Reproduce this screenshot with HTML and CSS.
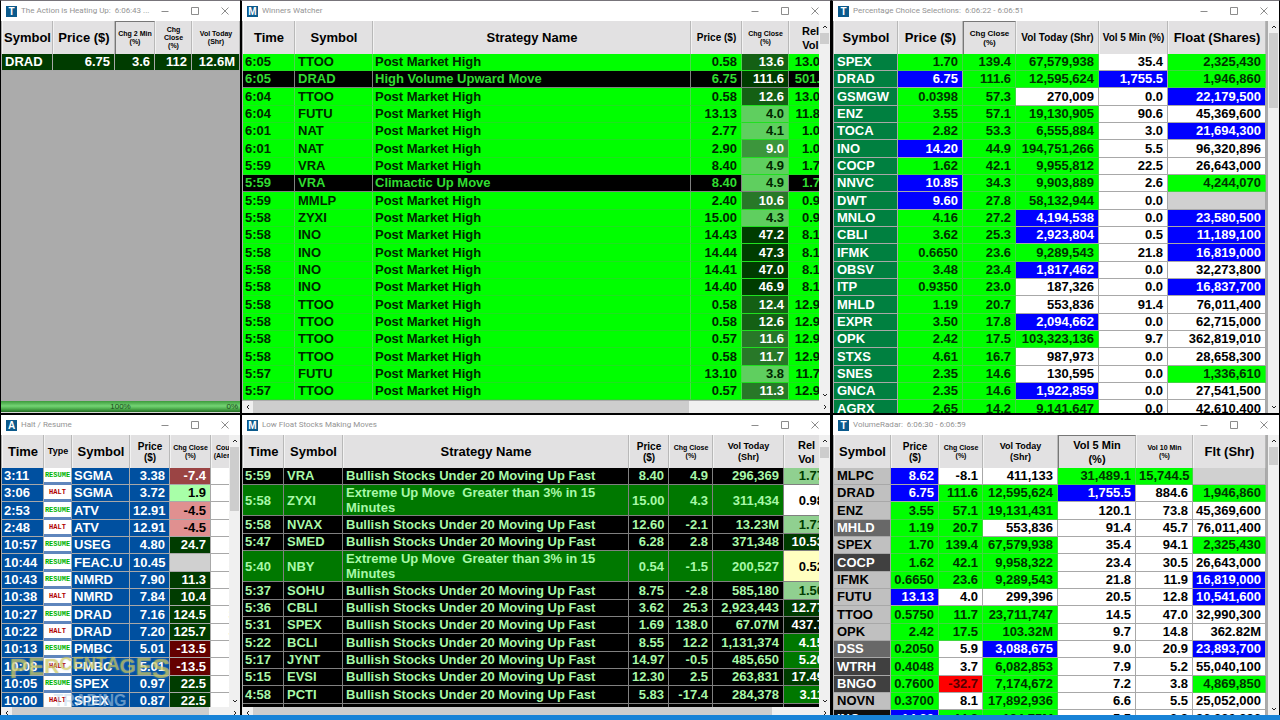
FILE: index.html
```html
<!DOCTYPE html>
<html lang="en">
<head>
    <meta charset="UTF-8">
    <meta name="viewport" content="width=device-width, initial-scale=1.0">
    <title>Stock Scanner</title>
    <link rel="stylesheet" href="styles.css">
</head>
<body>
    <main class="desktop">
        <section class="window heating">
            <header class="titlebar">
                <span class="app-icon">T</span>
                <h2>The Action is Heating Up:&nbsp; 6:06:43 ...</h2>
            </header>
            <div class="content">
                <div class="view">
                    <table>
                        <thead>
                            <tr>
                                <th>Symbol</th>
                                <th>Price ($)</th>
                                <th class="xs sorted">Chg 2 Min<br>(%)</th>
                                <th class="xs">Chg<br>Close<br>(%)</th>
                                <th class="xs">Vol Today<br>(Shr)</th>
                            </tr>
                        </thead>
                        <tbody id="heating-rows"></tbody>
                    </table>
                </div>
            </div>
            <div class="progress"><span>100%</span><span class="right">0%</span></div>
        </section>

        <section class="window middle winners">
            <header class="titlebar">
                <span class="app-icon">M</span>
                <h2>Winners Watcher</h2>
            </header>
            <div class="content">
                <div class="view">
                    <table>
                        <thead>
                            <tr>
                                <th>Time</th>
                                <th>Symbol</th>
                                <th>Strategy Name</th>
                                <th class="md">Price ($)</th>
                                <th class="xs">Chg Close<br>(%)</th>
                                <th class="lg">Rel<br>Vol</th>
                            </tr>
                        </thead>
                        <tbody id="winners-rows"></tbody>
                    </table>
                </div>
                <div class="vscroll"></div>
            </div>
            <div class="hscroll"></div>
        </section>

        <section class="window side choice">
            <header class="titlebar">
                <span class="app-icon">T</span>
                <h2>Percentage Choice Selections:&nbsp; 6:06:22 - 6:06:51</h2>
            </header>
            <div class="content">
                <div class="view">
                    <table>
                        <thead>
                            <tr>
                                <th>Symbol</th>
                                <th>Price ($)</th>
                                <th class="sm sorted">Chg Close<br>(%)</th>
                                <th class="md">Vol Today (Shr)</th>
                                <th class="md">Vol 5 Min (%)</th>
                                <th>Float (Shares)</th>
                            </tr>
                        </thead>
                        <tbody id="choice-rows"></tbody>
                    </table>
                </div>
                <div class="vscroll"></div>
            </div>
        </section>

        <section class="window halts">
            <header class="titlebar">
                <span class="app-icon">A</span>
                <h2>Halt / Resume</h2>
            </header>
            <div class="content">
                <div class="view">
                    <table>
                        <thead>
                            <tr>
                                <th>Time</th>
                                <th class="nm">Type</th>
                                <th>Symbol</th>
                                <th class="md">Price<br>($)</th>
                                <th class="xs">Chg Close<br>(%)</th>
                                <th class="xs">Count<br>(Alerts)</th>
                            </tr>
                        </thead>
                        <tbody id="halts-rows"></tbody>
                    </table>
                </div>
                <div class="vscroll"></div>
            </div>
            <div class="hscroll"></div>
            <div class="watermark">
                <div class="arch"><span class="a1">P</span><span class="a2">E</span><span class="a3">R</span><span class="a4">C</span><span class="a5">E</span><span class="a5">N</span><span class="a5">T</span><span class="a4">A</span><span class="a3">G</span><span class="a2">E</span><span class="a1">S</span></div>
                <div class="sub">TRADING</div>
            </div>
        </section>

        <section class="window middle lowfloat">
            <header class="titlebar">
                <span class="app-icon">M</span>
                <h2>Low Float Stocks Making Moves</h2>
            </header>
            <div class="content">
                <div class="view">
                    <table>
                        <thead>
                            <tr>
                                <th>Time</th>
                                <th>Symbol</th>
                                <th>Strategy Name</th>
                                <th class="md">Price<br>($)</th>
                                <th class="xs">Chg Close<br>(%)</th>
                                <th class="nm">Vol Today<br>(Shr)</th>
                                <th class="lg">Rel<br>Vol</th>
                            </tr>
                        </thead>
                        <tbody id="lowfloat-rows"></tbody>
                    </table>
                </div>
                <div class="vscroll"></div>
            </div>
            <div class="hscroll"></div>
        </section>

        <section class="window side radar">
            <header class="titlebar">
                <span class="app-icon">T</span>
                <h2>VolumeRadar:&nbsp; 6:06:30 - 6:06:59</h2>
            </header>
            <div class="content">
                <div class="view">
                    <table>
                        <thead>
                            <tr>
                                <th>Symbol</th>
                                <th class="md">Price<br>($)</th>
                                <th class="xs">Chg Close<br>(%)</th>
                                <th class="nm">Vol Today<br>(Shr)</th>
                                <th class="lg sorted">Vol 5 Min<br>(%)</th>
                                <th class="xs">Vol 10 Min<br>(%)</th>
                                <th>Flt (Shr)</th>
                            </tr>
                        </thead>
                        <tbody id="radar-rows"></tbody>
                    </table>
                </div>
                <div class="vscroll"></div>
            </div>
        </section>
    </main>
    <footer class="taskbar"></footer>

    <script src="script.js"></script>
</body>
</html>
```
FILE: styles.css
```css
* {
    box-sizing: border-box;
}
body {
    margin: 0;
    height: 100vh;
    display: flex;
    flex-direction: column;
    overflow: hidden;
    background: #000;
    font-family: "Liberation Sans", Arial, sans-serif;
    color: #000;
}
.desktop {
    flex: 1;
    min-height: 0;
    display: grid;
    grid-template-columns: 240fr 591fr 449fr;
    grid-template-rows: 414fr 301fr;
}
.taskbar {
    height: 5px;
    background: #1883d7;
}

/* windows */
.window {
    position: relative;
    display: flex;
    flex-direction: column;
    min-width: 0;
    min-height: 0;
    overflow: hidden;
    background: #ababab;
    border: 1px solid #000;
    border-right: none;
    border-bottom: none;
}
.window.middle, .window.side {
    border-left-width: 2px;
    border-right: 1px solid #000;
}
.heating, .winners, .choice {
    border-top-color: #77747a;
    border-bottom: 1px solid #000;
}
.titlebar {
    display: flex;
    align-items: center;
    flex: none;
    height: 20px;
    padding-left: 5px;
    background: #fff;
}
.app-icon {
    width: 11px;
    height: 11px;
    background: #0b5a8c;
    color: #fff;
    font-size: 10px;
    line-height: 11px;
    font-weight: bold;
    text-align: center;
}
.titlebar h2 {
    flex: 1;
    margin: 0 0 0 4px;
    font-family: Roboto, "Open Sans", sans-serif;
    font-size: 8px;
    line-height: 18px;
    font-weight: normal;
    white-space: nowrap;
    color: #949494;
}
.titlebar button {
    width: 30px;
    height: 18px;
    padding: 0;
    border: none;
    background: none;
    line-height: 0;
}
.titlebar svg {
    width: 8px;
    height: 8px;
    fill: none;
    stroke: #8c8c8c;
}
.content {
    flex: 1;
    min-height: 0;
    display: flex;
    padding-left: 1px;
}
.view {
    flex: 1;
    min-width: 0;
    overflow: hidden;
}
.side .view {
    padding-right: 2px;
}

/* scroll bars */
.vscroll {
    display: flex;
    flex-direction: column;
    align-items: center;
    width: 11px;
    background: #f0f0f0;
}
.hscroll {
    display: flex;
    flex: none;
    height: 12px;
    overflow: hidden;
    background: #f0f0f0;
}
.halts .hscroll, .lowfloat .hscroll {
    height: 8px;
}
.vscroll button, .hscroll button {
    width: 11px;
    height: 12px;
    flex: none;
    padding: 0;
    border: none;
    background: #f0f0f0;
    line-height: 0;
}
.vscroll svg, .hscroll svg {
    width: 8px;
    height: 8px;
    fill: none;
    stroke: #222;
}
.vscroll .thumb {
    width: 9px;
    height: 11px;
    background: #cdcdcd;
}
.hscroll .thumb {
    width: 436px;
    background: #cdcdcd;
}
.vscroll button:last-child {
    margin-top: auto;
}
.hscroll button:last-child {
    margin-left: auto;
}
.choice .vscroll .thumb {
    height: 75px;
}
.halts .vscroll .thumb {
    height: 64px;
}
.radar .vscroll .thumb {
    height: 18px;
}
.halts .hscroll .thumb {
    width: 197px;
}
.lowfloat .hscroll .thumb {
    width: 519px;
}

/* tables */
table {
    width: 100%;
    table-layout: fixed;
    border-collapse: separate;
    border-spacing: 0;
    font-size: 13px;
    font-weight: bold;
}
th {
    height: 33px;
    padding: 0;
    background: #e2e1e2;
    border-right: 1px solid #b8b8b8;
    border-left: 1px solid #f2f2f2;
    line-height: 14px;
    white-space: nowrap;
    overflow: hidden;
}
th.lg {
    font-size: 11px;
    line-height: 14px;
}
th.md {
    font-size: 10px;
    line-height: 11px;
}
th.nm {
    font-size: 9px;
    line-height: 11px;
}
th.sm {
    font-size: 8px;
    line-height: 9px;
}
th.xs {
    font-size: 7px;
    line-height: 8px;
}
th.sorted {
    border-top: 1px solid #777;
    border-left-color: #777;
}
td {
    height: 17px;
    padding: 0 4px 0 3px;
    border-right: 1px solid #a8a8a8;
    border-bottom: 1px solid #a8a8a8;
    line-height: 16px;
    text-align: right;
    white-space: nowrap;
}
tr:nth-child(3n) td {
    height: 18px;
}
td.g {
    background: #00ff00;
    color: #003200;
    border-color: #3fd83f;
}
td.b {
    background: #0000ff;
    color: #fff;
}
td.w {
    background: #fff;
}
td.r {
    background: #ff0000;
    color: #500;
}
td.n {
    background: #d0d0d0;
}
td.h1 {
    background: #003c00;
    color: #fff;
}

/* the action is heating up */
.heating th:nth-child(2) { width: 62px; }
.heating th:nth-child(3) { width: 40px; }
.heating th:nth-child(4) { width: 37px; }
.heating th:nth-child(5) { width: 48px; }
.heating td {
    background: #003c00;
    color: #fff;
}
.heating td:first-child, .choice td:first-child, .radar td:first-child {
    text-align: left;
}
.progress {
    display: grid;
    flex: none;
    height: 12px;
    background: linear-gradient(#3c9a3c, #74d474 45%, #4fae4f 70%, #226c22);
    border-bottom: 1px solid #d8d8d8;
    font-size: 8px;
    line-height: 11px;
    text-align: center;
    color: #1c4a1c;
}
.progress span {
    grid-area: 1 / 1;
}
.progress .right {
    padding-right: 2px;
    text-align: right;
}

/* winners watcher */
.winners table {
    width: calc(100% + 13px);
}
.winners th:nth-child(1) { width: 52px; }
.winners th:nth-child(2) { width: 78px; }
.winners th:nth-child(4) { width: 51px; }
.winners th:nth-child(5) { width: 47px; }
.winners th:nth-child(6) { width: 43px; }
.winners td {
    background: #00ff00;
    color: #002800;
    border-right-color: #4cd84c;
    border-bottom-color: #20e020;
}
.winners tr.dark td {
    background: #000;
    color: #30dc30;
    border-color: #808080;
}
.winners td:nth-child(-n+3), .lowfloat td:nth-child(-n+3) {
    padding-left: 2px;
    text-align: left;
}
.winners td:nth-child(2) {
    padding-left: 3px;
}
.winners td:nth-child(6) {
    padding-right: 11px;
}
.winners tr td.h1 { background: #003c00; color: #fff; }
.winners tr td.h2 { background: #146014; color: #fff; }
.winners tr td.h3 { background: #287828; color: #fff; }
.winners tr td.h4 { background: #3c963c; color: #fff; }
.winners tr td.h5 { background: #5fcf5f; color: #002800; }

/* percentage choice selections */
.choice th:nth-child(2) { width: 65px; }
.choice th:nth-child(3) { width: 53px; }
.choice th:nth-child(4) { width: 83px; }
.choice th:nth-child(5) { width: 69px; }
.choice th:nth-child(6) { width: 98px; }
.choice td:first-child {
    background: #008040;
    color: #fff;
}

/* halt / resume */
.halts table {
    width: calc(100% + 12px);
}
.halts th:nth-child(2) { width: 28px; }
.halts th:nth-child(3) { width: 58px; }
.halts th:nth-child(4) { width: 40px; }
.halts th:nth-child(5) { width: 41px; }
.halts th:nth-child(6) { width: 30px; }
.halts td {
    background: #0050a0;
    color: #fff;
}
.halts td:nth-child(1), .halts td:nth-child(3) {
    padding: 0 0 0 2px;
    text-align: left;
}
.halts tr td:nth-child(2) {
    padding: 0;
    background: #fff;
    border-bottom: 3px solid #5f86bd;
    font-family: "Liberation Mono", "Courier New", monospace;
    font-size: 7px;
    line-height: 12px;
    text-align: center;
    color: #b00000;
}
.halts tr td:nth-child(2).resume {
    color: #00b400;
}
.halts tr td:nth-child(6) {
    background: #fff;
    color: #000;
}
.halts td.red { background: #9b4444; }
.halts td.h1 { background: #003c00; }
.halts td.pink { background: #e09090; color: #000; }
.halts td.maroon { background: #640000; }
.halts td.mint { background: #a8ffa8; color: #000; }
.halts td.n { background: #d0d0d0; }

/* channel logo over the bottom rows */
.watermark {
    position: absolute;
    left: 9px;
    bottom: 6px;
    width: 160px;
    font-weight: bold;
    text-align: center;
    color: rgba(225, 205, 40, 0.5);
    pointer-events: none;
}
.arch {
    display: flex;
    justify-content: center;
    align-items: flex-start;
    height: 38px;
    font-family: "Liberation Sans Narrow", "Liberation Sans", sans-serif;
    text-shadow: 0 0 2px rgba(160, 190, 220, 0.6);
}
.arch span { line-height: 1; }
.arch .a1 { font-size: 28px; }
.arch .a2 { font-size: 24px; }
.arch .a3 { font-size: 21px; }
.arch .a4 { font-size: 18px; }
.arch .a5 { font-size: 17px; }
.watermark .sub {
    font-size: 16px;
    line-height: 16px;
    color: rgba(190, 215, 235, 0.55);
}

/* low float stocks making moves */
.lowfloat table {
    width: calc(100% + 10px);
}
.lowfloat th:nth-child(1) { width: 41px; }
.lowfloat th:nth-child(2) { width: 59px; }
.lowfloat th:nth-child(4) { width: 40px; }
.lowfloat th:nth-child(5) { width: 44px; }
.lowfloat th:nth-child(6) { width: 71px; }
.lowfloat th:nth-child(7) { width: 45px; }
.lowfloat td {
    background: #000;
    color: #a8f8a8;
    border-color: #808080;
}
.lowfloat td:nth-child(n+2):nth-child(-n+3) {
    padding-left: 3px;
}
.lowfloat tr.tall td {
    height: 31px;
    background: #007800;
    line-height: 15px;
}
.lowfloat tr.tall td:nth-child(3) {
    white-space: pre-line;
}
.lowfloat tr td.h1 { background: #003c00; color: #fff; }
.lowfloat tr td.h0 { background: #001400; color: #fff; }
.lowfloat tr td.h3 { background: #007800; color: #fff; }
.lowfloat tr td.h5 { background: #90d090; color: #003c00; }
.lowfloat tr.tall td.w { background: #fff; color: #000; }
.lowfloat tr.tall td.y { background: #ffffc0; color: #000; }

/* volume radar */
.radar th:nth-child(2) { width: 48px; }
.radar th:nth-child(3) { width: 44px; }
.radar th:nth-child(4) { width: 75px; }
.radar th:nth-child(5) { width: 78px; }
.radar th:nth-child(6) { width: 57px; }
.radar th:nth-child(7) { width: 73px; }
.radar td:first-child {
    background: #c0c0c0;
}
.radar tr td.d1 { background: #686868; color: #fff; }
.radar tr td.d2 { background: #404040; color: #fff; }
.radar tr td.d3 { background: #101010; color: #fff; }
```
FILE: script.js
```javascript
// cell format: "text" or "class=text", a row may start with "#class"
const UP = 'Post Market High';
const BULL = 'Bullish Stocks Under 20 Moving Up Fast';
const EXTREME = 'Extreme Up Move \u00a0Greater than 3% in 15\nMinutes';

const heating = ['DRAD|6.75|3.6|112|12.6M'];

const winners = [
    `6:05|TTOO|${UP}|0.58|h2=13.6|13.0`,
    '#dark|6:05|DRAD|High Volume Upward Move|6.75|h1=111.6|501.',
    `6:04|TTOO|${UP}|0.58|h2=12.6|13.0`,
    `6:04|FUTU|${UP}|13.13|h5=4.0|11.8`,
    `6:01|NAT|${UP}|2.77|h5=4.1|1.0`,
    `6:01|NAT|${UP}|2.90|h4=9.0|1.0`,
    `5:59|VRA|${UP}|8.40|h5=4.9|1.7`,
    '#dark|5:59|VRA|Climactic Up Move|8.40|h5=4.9|1.7',
    `5:59|MMLP|${UP}|2.40|h3=10.6|0.9`,
    `5:58|ZYXI|${UP}|15.00|h5=4.3|0.9`,
    `5:58|INO|${UP}|14.43|h1=47.2|8.1`,
    `5:58|INO|${UP}|14.44|h1=47.3|8.1`,
    `5:58|INO|${UP}|14.41|h1=47.0|8.1`,
    `5:58|INO|${UP}|14.40|h1=46.9|8.1`,
    `5:58|TTOO|${UP}|0.58|h2=12.4|12.9`,
    `5:58|TTOO|${UP}|0.58|h2=12.6|12.9`,
    `5:58|TTOO|${UP}|0.57|h3=11.6|12.9`,
    `5:58|TTOO|${UP}|0.58|h3=11.7|12.9`,
    `5:57|FUTU|${UP}|13.10|h5=3.8|11.7`,
    `5:57|TTOO|${UP}|0.57|h3=11.3|12.9`
];

const choice = [
    'SPEX|g=1.70|g=139.4|g=67,579,938|w=35.4|g=2,325,430',
    'DRAD|b=6.75|g=111.6|g=12,595,624|b=1,755.5|g=1,946,860',
    'GSMGW|g=0.0398|g=57.3|w=270,009|w=0.0|b=22,179,500',
    'ENZ|g=3.55|g=57.1|g=19,130,905|w=90.6|w=45,369,600',
    'TOCA|g=2.82|g=53.3|g=6,555,884|w=3.0|b=21,694,300',
    'INO|b=14.20|g=44.9|g=194,751,266|w=5.5|w=96,320,896',
    'COCP|g=1.62|g=42.1|g=9,955,812|w=22.5|w=26,643,000',
    'NNVC|b=10.85|g=34.3|g=9,903,889|w=2.6|g=4,244,070',
    'DWT|b=9.60|g=27.8|g=58,132,944|w=0.0|n=',
    'MNLO|g=4.16|g=27.2|b=4,194,538|w=0.0|b=23,580,500',
    'CBLI|g=3.62|g=25.3|b=2,923,804|w=0.5|b=11,189,100',
    'IFMK|g=0.6650|g=23.6|g=9,289,543|w=21.8|b=16,819,000',
    'OBSV|g=3.48|g=23.4|b=1,817,462|w=0.0|w=32,273,800',
    'ITP|g=0.9350|g=23.0|w=187,326|w=0.0|b=16,837,700',
    'MHLD|g=1.19|g=20.7|w=553,836|w=91.4|w=76,011,400',
    'EXPR|g=3.50|g=17.8|b=2,094,662|w=0.0|w=62,715,000',
    'OPK|g=2.42|g=17.5|g=103,323,136|w=9.7|w=362,819,010',
    'STXS|g=4.61|g=16.7|w=987,973|w=0.0|w=28,658,300',
    'SNES|g=2.35|g=14.6|w=130,595|w=0.0|g=1,336,610',
    'GNCA|g=2.35|g=14.6|b=1,922,859|w=0.0|w=27,541,500',
    'AGRX|g=2.65|g=14.2|g=9,141,647|w=0.0|w=42,610,400'
];

const halts = [
    '3:11|resume=RESUME|SGMA|3.38|red=-7.4|1',
    '3:06|HALT|SGMA|3.72|mint=1.9|1',
    '2:53|resume=RESUME|ATV|12.91|pink=-4.5|1',
    '2:48|HALT|ATV|12.91|pink=-4.5|1',
    '10:57|resume=RESUME|USEG|4.80|h1=24.7|1',
    '10:44|resume=RESUME|FEAC.U|10.45|n=|1',
    '10:43|resume=RESUME|NMRD|7.90|h1=11.3|1',
    '10:38|HALT|NMRD|7.84|h1=10.4|1',
    '10:27|resume=RESUME|DRAD|7.16|h1=124.5|3',
    '10:22|HALT|DRAD|7.20|h1=125.7|3',
    '10:13|resume=RESUME|PMBC|5.01|maroon=-13.5|1',
    '10:08|HALT|PMBC|5.01|maroon=-13.5|1',
    '10:05|resume=RESUME|SPEX|0.97|h1=22.5|1',
    '10:00|HALT|SPEX|0.87|h1=22.5|1'
];

const lowfloat = [
    `5:59|VRA|${BULL}|8.40|4.9|296,369|h5=1.77`,
    `#tall|5:58|ZYXI|${EXTREME}|15.00|4.3|311,434|w=0.98`,
    `5:58|NVAX|${BULL}|12.60|-2.1|13.23M|h5=1.71`,
    `5:47|SMED|${BULL}|6.28|2.8|371,348|h1=10.53`,
    `#tall|5:40|NBY|${EXTREME}|0.54|-1.5|200,527|y=0.52`,
    `5:37|SOHU|${BULL}|8.75|-2.8|585,180|h5=1.50`,
    `5:36|CBLI|${BULL}|3.62|25.3|2,923,443|h1=12.77`,
    `5:31|SPEX|${BULL}|1.69|138.0|67.07M|h0=437.7`,
    `5:22|BCLI|${BULL}|8.55|12.2|1,131,374|h3=4.15`,
    `5:17|JYNT|${BULL}|14.97|-0.5|485,650|h3=5.20`,
    `5:15|EVSI|${BULL}|12.30|2.5|263,831|h1=17.49`,
    `4:58|PCTI|${BULL}|5.83|-17.4|284,378|h3=3.11`,
    '||||||'
];

const radar = [
    'MLPC|b=8.62|w=-8.1|w=411,133|g=31,489.1|g=15,744.5|n=',
    'DRAD|b=6.75|g=111.6|g=12,595,624|b=1,755.5|w=884.6|g=1,946,860',
    'ENZ|g=3.55|g=57.1|g=19,131,431|w=120.1|w=73.8|w=45,369,600',
    'd1=MHLD|g=1.19|g=20.7|w=553,836|w=91.4|w=45.7|w=76,011,400',
    'SPEX|g=1.70|g=139.4|g=67,579,938|w=35.4|w=94.1|g=2,325,430',
    'd2=COCP|g=1.62|g=42.1|g=9,958,322|w=23.4|w=30.5|w=26,643,000',
    'IFMK|g=0.6650|g=23.6|g=9,289,543|w=21.8|w=11.9|b=16,819,000',
    'FUTU|b=13.13|w=4.0|w=299,396|w=20.5|w=12.8|b=10,541,600',
    'TTOO|g=0.5750|g=11.7|g=23,711,747|w=14.5|w=47.0|w=32,990,300',
    'OPK|g=2.42|g=17.5|g=103.32M|w=9.7|w=14.8|w=362.82M',
    'd1=DSS|g=0.2050|w=5.9|b=3,088,675|w=9.0|w=20.9|b=23,893,700',
    'd2=WTRH|g=0.4048|w=3.7|g=6,082,853|w=7.9|w=5.2|w=55,040,100',
    'd2=BNGO|g=0.7600|r=-32.7|g=7,174,672|w=7.2|w=3.8|g=4,869,850',
    'NOVN|g=0.3700|w=8.1|g=17,892,936|w=6.6|w=5.5|w=25,052,000',
    'd3=INO|b=14.20|g=44.9|g=194.75M|w=5.5|w=3.9|w=96,320,896'
];

function fillTable(id, rows) {
    const body = document.getElementById(id);
    rows.forEach(row => {
        const tr = document.createElement('tr');
        const cells = row.split('|');
        if (cells[0].startsWith('#')) {
            tr.className = cells.shift().slice(1);
        }
        cells.forEach(cell => {
            const td = document.createElement('td');
            const pos = cell.indexOf('=');
            if (pos > 0) {
                td.className = cell.slice(0, pos);
            }
            td.textContent = cell.slice(pos + 1);
            tr.appendChild(td);
        });
        body.appendChild(tr);
    });
}

function button(label, path) {
    return `<button type="button" aria-label="${label}"><svg viewBox="0 0 8 8"><path d="${path}"/></svg></button>`;
}

fillTable('heating-rows', heating);
fillTable('winners-rows', winners);
fillTable('choice-rows', choice);
fillTable('halts-rows', halts);
fillTable('lowfloat-rows', lowfloat);
fillTable('radar-rows', radar);

document.querySelectorAll('.titlebar').forEach(bar => {
    bar.insertAdjacentHTML('beforeend',
        button('Minimize', 'M0.5 4.5H7.5') +
        button('Maximize', 'M0.5 0.5H7.5V7.5H0.5Z') +
        button('Close', 'M0.5 0.5L7.5 7.5M7.5 0.5L0.5 7.5'));
});
document.querySelectorAll('.vscroll').forEach(bar => {
    bar.innerHTML = button('Scroll up', 'M2 5L4 3L6 5') + '<div class="thumb"></div>' + button('Scroll down', 'M2 3L4 5L6 3');
});
document.querySelectorAll('.hscroll').forEach(bar => {
    bar.innerHTML = button('Scroll left', 'M5 2L3 4L5 6') + '<div class="thumb"></div>' + button('Scroll right', 'M3 2L5 4L3 6');
});
```
